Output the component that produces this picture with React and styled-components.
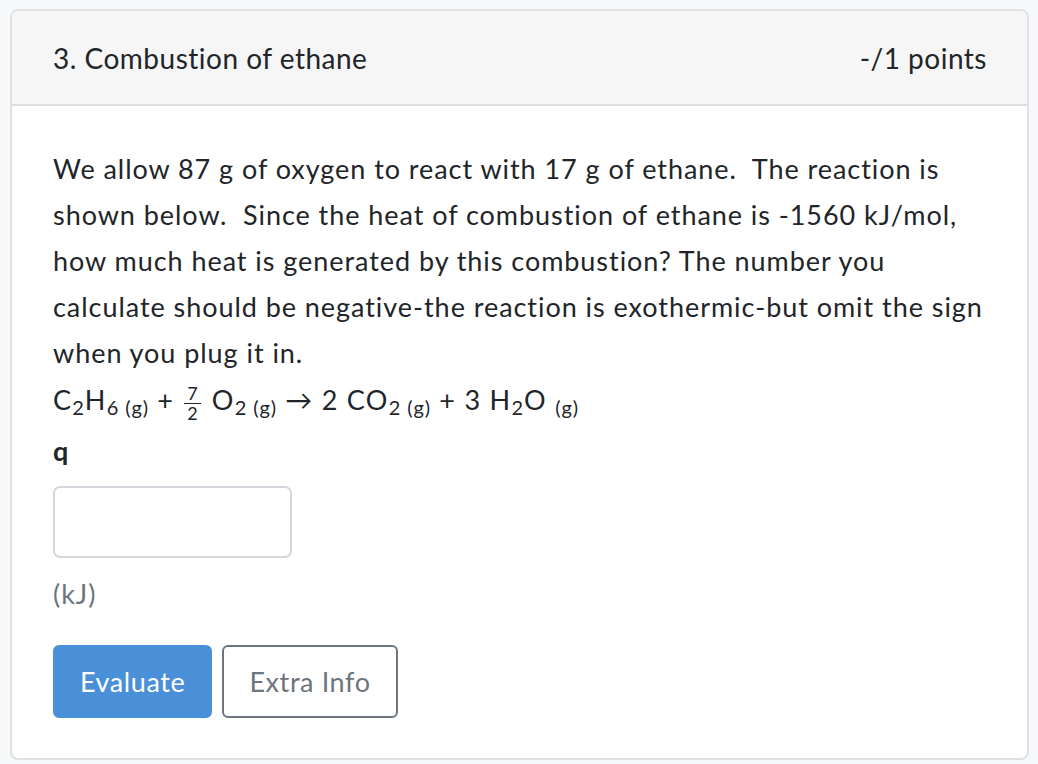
import React from 'react'
import styled, { createGlobalStyle } from 'styled-components'

const Global = createGlobalStyle`
body {
  margin: 0;
  background: #f8f9fa;
  font-family: Lato, "Noto Sans", sans-serif;
  color: #212529;
}
`
const Page = styled.div`
padding: 9px 9px 3px 10px;
`
const Card = styled.div`
background: #fff;
border: 2px solid #dfe1e3;
border-radius: 8px;
overflow: hidden;
`
const Header = styled.div`
display: flex;
justify-content: space-between;
align-items: center;
height: 93px;
padding: 0 40px 0 41px;
background: #f6f6f6;
border-bottom: 2px solid #dcdee0;
font-size: 28px;
letter-spacing: 0.5px;
`
const Body = styled.div`
padding: 40px 28px 40px 41px;
font-size: 27px;
letter-spacing: 0.95px;
line-height: 46px;
`
const Para = styled.p`
margin: 0;
`
const Eq = styled.div`
display: flex;
align-items: center;
height: 48px;
letter-spacing: 1.3px;
`
const Sub = styled.sub`
font-size: 20px;
vertical-align: -5px;
line-height: 0;
letter-spacing: 0.9px;
`
const Frac = styled.span`
display: inline-flex;
flex-direction: column;
align-items: center;
font-size: 18px;
line-height: 18px;
margin: 0 11px 0 10px;
vertical-align: middle;
letter-spacing: 0;
`
const Num = styled.span`
border-bottom: 1.5px solid #212529;
padding: 0 3px 1px;
`
const Q = styled.div`
font-weight: 700;
margin-top: 4px;
`
const Input = styled.input`
display: block;
box-sizing: border-box;
width: 239px;
height: 72px;
margin-top: 12px;
border: 2px solid #d3d7db;
border-radius: 7px;
`
const Unit = styled.div`
color: #6c757d;
margin-top: 13px;
`
const Actions = styled.div`
display: flex;
gap: 10px;
margin-top: 28px;
`
const Button = styled.button`
box-sizing: border-box;
height: 73px;
padding: 0 25px;
border-radius: 6px;
font-family: inherit;
font-size: 27px;
letter-spacing: 0.6px;
cursor: pointer;
background: ${p => p.$primary ? '#4a90d9' : '#fff'};
color: ${p => p.$primary ? '#fff' : '#6c757d'};
border: 2px solid ${p => p.$primary ? '#4a90d9' : '#6c757d'};
`

export default function App() {
  return (
    <Page>
      <Global />
      <Card>
        <Header>
          <span>3. Combustion of ethane</span>
          <span>-/1 points</span>
        </Header>
        <Body>
          <Para>
            We allow 87 g of oxygen to react with 17 g of ethane.&nbsp; The reaction is shown below.&nbsp; Since the heat of combustion of ethane is -1560 kJ/mol, how much heat is generated by this combustion? The number you calculate should be negative-the reaction is exothermic-but omit the sign when you plug it in.
          </Para>
          <Eq>
            <span>
              C<Sub>2</Sub>H<Sub>6 (g)</Sub> +
              <Frac><Num>7</Num><span>2</span></Frac>
              O<Sub>2 (g)</Sub> → 2 CO<Sub>2 (g)</Sub> + 3 H<Sub>2</Sub>O <Sub>(g)</Sub>
            </span>
          </Eq>
          <Q>q</Q>
          <Input type="text" />
          <Unit>(kJ)</Unit>
          <Actions>
            <Button $primary>Evaluate</Button>
            <Button>Extra Info</Button>
          </Actions>
        </Body>
      </Card>
    </Page>
  )
}
